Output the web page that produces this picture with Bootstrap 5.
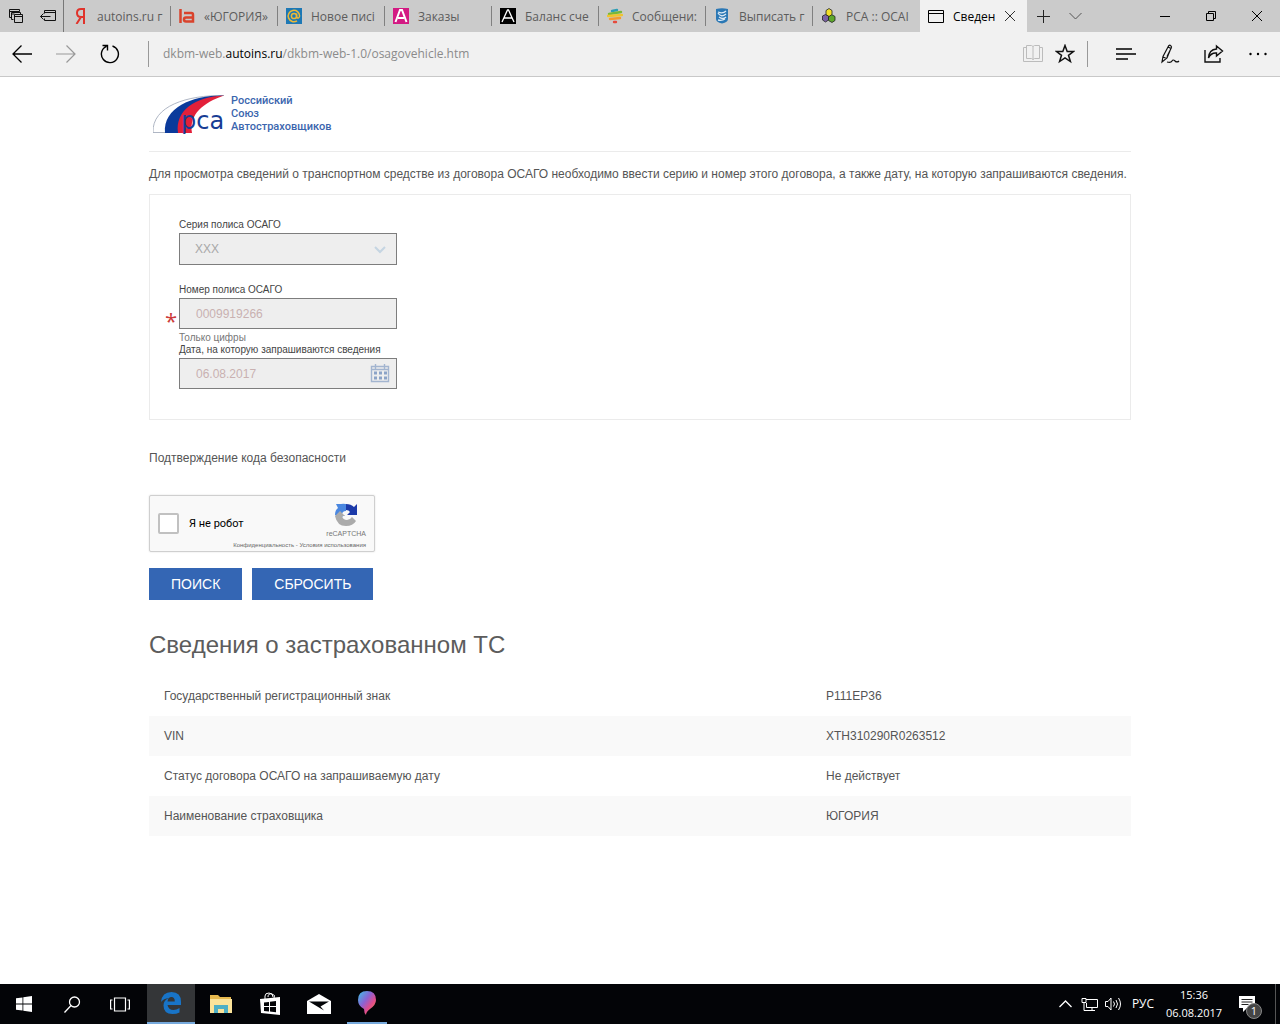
<!DOCTYPE html>
<html lang="ru">
<head>
<meta charset="utf-8">
<meta name="viewport" content="width=device-width, initial-scale=1">
<title>Сведения о застрахованном ТС</title>
<link href="https://cdn.jsdelivr.net/npm/bootstrap@5.3.0/dist/css/bootstrap.min.css" rel="stylesheet">
<style>
body{font-family:"Liberation Sans",Arial,sans-serif;font-size:12px;line-height:16px;color:#555;background:#fff}
button{font-family:inherit}
svg{display:block;flex:none}
.chrome-ui{font-family:"Open Sans","Noto Sans",sans-serif}
.bare{border:0;background:none;padding:0;color:inherit;display:flex;align-items:center;justify-content:center;flex:none}
/* tab strip */
.tabstrip{height:32px;background:#cbcbcb;color:#000}
.tabtools{width:64px;border-right:1px solid #777}
.tab-item{width:107px;height:32px;padding:0 8px;gap:9px;color:#5c5c5c;text-decoration:none;position:relative;flex:0 1 auto;min-width:0}
.tab-item+.tab-item:not(.current)::before{content:"";position:absolute;left:-1px;top:6px;height:20px;width:1px;background:#808080}
.tab-item.current{background:#f1f1f1;color:#000}
.tab-item span{white-space:nowrap;flex:1;min-width:0;padding-top:1px}
.w32{width:32px;height:32px}
.w46{width:46px;height:32px}
/* address bar */
.addressbar{height:45px;background:#f1f1f1;border-bottom:1px solid #c8c8c8;color:#111}
.w44{width:44px;height:44px}
.rule{width:1px;height:26px;background:#999}
.rule-gap{margin:0 16px 0 6px}
.address{min-width:0}
.url{padding-left:14px;font-size:12px;color:#8b8b8b;min-width:0;overflow:hidden;white-space:nowrap}
.url b{font-weight:400;color:#000}
/* page */
.sheet{width:100%;max-width:982px}
.brandrow{height:75px;padding-top:17px;border-bottom:1px solid #ebebeb}
.brandname{font:500 11px/13px Roboto,sans-serif;color:#3b66ae}
.lede{padding-top:14px}
.policy{margin-top:12px;padding:24px 15px 30px;border:1px solid #ebebeb}
.fields{display:grid;grid-template-columns:14px 218px}
.fields>*{grid-column:2}
.fields>.star{grid-column:1;color:#cc3b3b;height:31px;font:22px/44px "Open Sans",sans-serif}
.fields label,.hint{font-size:10px;line-height:12px;color:#444}
.fields .hint{color:#777;margin-top:3px}
.fields label{margin-bottom:2px}
.fields .label-gap{margin-top:19px}
.field{height:31px;width:100%;border:1px solid #7d7d7d;border-radius:0;background:#eee;color:#c9b1b1;padding:0 16px}
select.field{height:32px;appearance:none;color:#a8a8a8;padding:0 15px;opacity:1}
.over{position:absolute;right:7px;top:5px}
.confirm{margin-top:30px;padding-bottom:29px}
.captcha{width:226px;height:57px;background:#f9f9f9;border:1px solid #cfcfcf;border-radius:2px;padding:0 8px 6px;box-shadow:0 0 2px #ddd}
.captcha>input,.captcha>label{margin-top:6px}
.captcha input{appearance:none;width:21px;height:21px;border:2px solid #c1c1c1;border-radius:2px;background:#fff}
.captcha label{font:11px/16px Roboto,sans-serif;color:#000;margin-left:10px}
.tiny{font-size:7px;line-height:9px;color:#777;margin-top:2px}
.legalrow{width:226px;height:8px;margin-top:-11px;padding-right:9px;text-align:right}
.legal{display:block;font-size:6px;line-height:8px;color:#666}
.legal a{color:inherit;text-decoration:none}
.actions{gap:10px;margin-top:19px}
.action{height:32px;border-radius:0;background:#3466b4;color:#fff;border:0;font-size:14px;line-height:32px;padding:0 22px}
.action:hover{background:#2a559a;color:#fff}
h1{font-size:24px;line-height:30px;color:#5c5c5c;font-weight:400}
.facts-title{margin:30px 0 16px}
.facts{width:100%;margin:0}
.facts th,.facts td{font-weight:400;padding:12px 15px;height:40px}
.facts th{width:662px}
.facts tr:nth-child(even){background:#f9f9f9}
/* taskbar */
.taskbar{height:40px;background:#030407;color:#fff}
.w48{width:48px;height:40px}
.w49{width:49px;height:40px}
.apps{margin-left:3px}
.running{border-bottom:2px solid #76a9dc}
.focused{background:#343638;width:48px;margin-right:1px}
.paint{width:40px;margin-left:4px}
.w24{width:24px;height:40px}
.lang{width:36px;height:40px}
.clock{width:66px;font-size:11px;line-height:18px}
.notify{position:relative;width:40px;height:40px}
.desktop-edge{width:5px;height:40px;margin-left:8px;border-left:1px solid #555}
.count{position:absolute;left:19px;top:19px;width:16px;height:16px;border-radius:50%;background:#454545;border:1px solid #888;font-size:11px;line-height:14px;text-align:center}
</style>
<script src="https://cdn.jsdelivr.net/npm/bootstrap@5.3.0/dist/js/bootstrap.bundle.min.js"></script>
</head>
<body>
<div class="d-flex flex-column min-vh-100">

<header class="chrome-ui">
  <div class="tabstrip d-flex align-items-center">
    <div class="tabtools d-flex">
      <button class="bare w32" aria-label="Отложенные вкладки"><svg width="16" height="16" viewBox="0 0 16 16" fill="none" stroke="#111"><path d="M3.5 9.5h-2v-8h10v2M1.500 3.500h10M5.500 11.500h-2v-7h9v2M3.500 6h3M6.500 6.500h8v8h-8zM6.500 8.500h8"/></svg></button>
      <button class="bare w32" aria-label="Отложить вкладки"><svg width="16" height="16" viewBox="0 0 16 16" fill="none" stroke="#111"><path d="M4.500 5.500v-3h11v10h-11v-2M4.500 4.500h11M.5 8.500h10M3.500 5.500l-3 3 3 3"/></svg></button>
    </div>
    <nav class="d-flex flex-shrink-1" aria-label="Вкладки">
      <a href="#" class="tab-item d-flex align-items-center"><svg width="16" height="16" viewBox="0 0 16 16" fill="none" stroke="#e0332b" stroke-width="2"><path d="M12 16V1H9Q5 1 5 5t4 4h3M9 9L4.500 16"/></svg><span>autoins.ru г</span></a>
      <a href="#" class="tab-item d-flex align-items-center"><svg width="16" height="16" viewBox="0 0 16 16" fill="none" stroke="#d9432c" stroke-width="2.500"><path d="M1.500 1v14M5 5h7.500q1.500 0 1.500 2v6.500H7q-2 0-2-2t2-2h7"/></svg><span>«ЮГОРИЯ»</span></a>
      <a href="#" class="tab-item d-flex align-items-center"><svg width="16" height="16" viewBox="0 0 16 16" fill="none" stroke="#eeb936" stroke-width="1.500"><path fill="#1d78b5" stroke="none" d="M0 0h16v16H0z"/><circle cx="8" cy="8" r="2.600"/><path d="M10.600 5.500v4q2.500 1.500 3-1.500A5.700 5.700 0 1 0 11 12.800"/></svg><span>Новое писі</span></a>
      <a href="#" class="tab-item d-flex align-items-center"><svg width="16" height="16" viewBox="0 0 16 16"><path fill="#d31a83" d="M0 0h16v16H0z"/><path d="M2.500 14L7 2h2l4.500 12M5 10h6" fill="none" stroke="#fff" stroke-width="2"/></svg><span>Заказы</span></a>
      <a href="#" class="tab-item d-flex align-items-center"><svg width="16" height="16" viewBox="0 0 16 16"><path d="M0 0h16v16H0z"/><path d="M2 14L7.500 2h1L14 14M4 10h8" fill="none" stroke="#fff" stroke-width="1.300"/></svg><span>Баланс сче</span></a>
      <a href="#" class="tab-item d-flex align-items-center"><svg width="16" height="16" viewBox="0 0 16 16" fill="none" stroke-width="2.400" stroke-linecap="round"><path stroke="#2b9eb5" d="M5 3l5-1"/><path stroke="#78b83a" d="M2 6l12-2"/><path stroke="#f0c52e" d="M1 8l14-1"/><path stroke="#f39b31" d="M3 11l10-1"/><path stroke="#e64a3c" d="M7 14h2"/></svg><span>Сообщени:</span></a>
      <a href="#" class="tab-item d-flex align-items-center"><svg width="16" height="16" viewBox="0 0 16 16"><path d="M2 1q6-1.500 12 0v10q0 3-6 4.500Q2 14 2 11z" fill="#2b78b5"/><path d="M4 4q5 2 8-1M4 5q3 5 8 1M5 9q4 3 7 0M4 12q4 1 7-1" fill="none" stroke="#dceaf5" stroke-width="1.300"/></svg><span>Выписать г</span></a>
      <a href="#" class="tab-item d-flex align-items-center"><svg width="16" height="16" viewBox="0 0 16 16" stroke="#222" stroke-width=".8"><path fill="#7b62a5" d="M1.500 8l3-1.500 3 1.500v4l-3 2-3-2z"/><path fill="#5da82c" d="M7.500 9l3-2.500 3.500 2v4l-3 2-3.500-2z"/><path fill="#f2df28" d="M5 2.500l3-2 3 2v4L8 8.500l-3-2z"/></svg><span>РСА :: ОСАІ</span></a>
      <a href="#" class="tab-item current d-flex align-items-center" aria-current="page"><svg width="16" height="16" viewBox="0 0 16 16" fill="none" stroke="#000"><path d="M.5 2.500h15v12H.5zM.5 5.500h15"/></svg><span>Сведен</span><svg class="me-1" width="10" height="10" viewBox="0 0 10 10" stroke="#333"><path d="M0 0l10 10M10 0L0 10"/></svg></a>
    </nav>
    <button class="bare w32" aria-label="Новая вкладка"><svg width="13" height="13" viewBox="0 0 13 13" stroke="#222"><path d="M0 6.500h13M6.500 0v13"/></svg></button>
    <button class="bare w32" aria-label="Показать вкладки"><svg width="13" height="8" viewBox="0 0 13 8" fill="none" stroke="#555"><path d="M.5 1l6 6 6-6"/></svg></button>
    <div class="d-flex ms-auto">
      <button class="bare w46" aria-label="Свернуть"><svg width="10" height="10" viewBox="0 0 10 10" stroke="#000"><path d="M0 5.500h10"/></svg></button>
      <button class="bare w46" aria-label="Восстановить"><svg width="10" height="10" viewBox="0 0 10 10" fill="none" stroke="#000"><path d="M.5 2.500h7v7h-7zM2.500 2.500v-2h7v7h-2"/></svg></button>
      <button class="bare w46" aria-label="Закрыть"><svg width="10" height="10" viewBox="0 0 10 10" stroke="#000"><path d="M0 0l10 10M10 0L0 10"/></svg></button>
    </div>
  </div>
  <div class="addressbar d-flex align-items-center">
    <button class="bare w44" aria-label="Назад"><svg width="20" height="18" viewBox="0 0 20 18" fill="none" stroke="#000" stroke-width="1.300"><path d="M9.500.5L1 9l8.500 8.500M1 9h19"/></svg></button>
    <button class="bare w44" aria-label="Вперёд"><svg width="20" height="18" viewBox="0 0 20 18" fill="none" stroke="#999" stroke-width="1.200"><path d="M10.500.5L19 9l-8.500 8.500M19 9H0"/></svg></button>
    <button class="bare w44" aria-label="Обновить"><svg width="20" height="20" viewBox="0 0 20 20" fill="none" stroke="#000" stroke-width="1.400"><path d="M12.500 2a8.500 8.500 0 1 1-6 .3M2.500 1.500h5v5"/></svg></button>
    <div class="address d-flex align-items-center flex-grow-1 ms-3">
      <div class="rule"></div>
      <div class="url" role="textbox" aria-label="Адрес">dkbm-web.<b>autoins.ru</b>/dkbm-web-1.0/osagovehicle.htm</div>
    </div>
    <button class="bare w32" aria-label="Режим чтения"><svg width="20" height="18" viewBox="0 0 20 18" fill="none" stroke="#bcbcbc"><path d="M3.500 2.500h-3v14h19v-14h-3M10 1.500v13M3.500.5h5l1.500 1 1.500-1h5v13h-5l-1.500 1-1.500-1h-5z"/></svg></button>
    <button class="bare w32" aria-label="В избранное"><svg width="20" height="20" viewBox="0 0 20 20" fill="none" stroke="#111" stroke-width="1.500"><path d="M10 1.500l2.200 6H18.500l-5 3.800 1.900 6.200L10 13.800l-5.400 3.700 1.900-6.200-5-3.800h6.300z"/></svg></button>
    <div class="rule rule-gap"></div>
    <button class="bare w44" aria-label="Концентратор"><svg width="20" height="12" viewBox="0 0 20 12" stroke="#000" stroke-width="1.300"><path d="M0 1h16M0 6h20M0 11h12"/></svg></button>
    <button class="bare w44" aria-label="Веб-заметка"><svg width="20" height="20" viewBox="0 0 20 20" fill="none" stroke="#111" stroke-width="1.200"><path d="M2 18l1-5.500L8.500 2q2-2 3 1L7 14l-5 4zM3 13l3.500 1.500M8 3l3 1.500-4 8M7 18q4 1 5-1t3 0 4 0"/></svg></button>
    <button class="bare w44" aria-label="Поделиться"><svg width="20" height="20" viewBox="0 0 20 20" fill="none" stroke="#111" stroke-width="1.400"><path d="M1 6v12h15v-4M12.500 2l6 5-6 5V9Q7 8.500 4.500 14 5 5.500 12.500 5z"/></svg></button>
    <button class="bare w44" aria-label="Дополнительно"><svg width="18" height="4" viewBox="0 0 18 4"><circle cx="1.500" cy="2" r="1.200"/><circle cx="9" cy="2" r="1.200"/><circle cx="16.500" cy="2" r="1.200"/></svg></button>
  </div>
</header>

<main class="sheet mx-auto flex-grow-1">
  <div class="brandrow d-flex align-items-start">
    <svg class="ms-1" width="74" height="42" viewBox="0 0 74 42" role="img" aria-label="РСА">
      <path d="M0 38.500C-1 12 34 1 71 1.500" fill="none" stroke="#9aa3b5" stroke-width=".8"/>
      <path d="M0 38.500h14" stroke="#9aa3b5" stroke-width=".8"/>
      <path d="M12 39C10 13 40 1 71 1.500 38 7 24 18 26 39z" fill="#0b3a9b"/>
      <path d="M25 39C22 16 42 3 71 1.500 50 9 36 20 39 39z" fill="#e3203a"/>
      <text x="28" y="35" font-family="DejaVu Sans" font-size="24" fill="#173d94">рса</text>
    </svg>
    <div class="brandname ms-1">Российский<br>Союз<br>Автостраховщиков</div>
  </div>
  <p class="mb-0 lede">Для просмотра сведений о транспортном средстве из договора ОСАГО необходимо ввести серию и номер этого договора, а также дату, на которую запрашиваются сведения.</p>

  <form onsubmit="return false">
    <div class="policy">
      <div class="fields">
        <label for="series">Серия полиса ОСАГО</label>
        <div class="position-relative">
          <select id="series" class="field" disabled><option>XXX</option></select>
          <svg class="over me-1 mt-1" width="12" height="12" viewBox="0 0 12 12" fill="none" stroke="#c5d5e2" stroke-width="2"><path d="M1 5l5 5 5-5"/></svg>
        </div>
        <label for="number" class="label-gap">Номер полиса ОСАГО</label>
        <span class="star">*</span>
        <input id="number" class="field" value="0009919266" disabled>
        <span class="hint">Только цифры</span>
        <label for="date">Дата, на которую запрашиваются сведения</label>
        <div class="position-relative">
          <input id="date" class="field" value="06.08.2017" disabled>
          <button type="button" class="bare over" aria-label="Календарь"><svg width="20" height="20" viewBox="0 0 20 20"><path d="M1.500 3.500h17v15h-17zM1.500 6.500h17M5.500 1v5M14.500 1v5" fill="none" stroke="#a3b5d0" stroke-width="1.400"/><path d="M4 10h3M9 10h3M14 10h3M4 15h3M9 15h3M14 15h3" stroke="#8ca3c7" stroke-width="3"/></svg></button>
        </div>
      </div>
    </div>
    <p class="confirm mb-0">Подтверждение кода безопасности</p>
    <div class="captcha d-flex align-items-center">
      <input type="checkbox" id="robot"><label for="robot">Я не робот</label>
      <div class="ms-auto d-flex flex-column align-items-center">
        <svg width="24" height="24" viewBox="0 0 24 24"><path fill="#4a87e0" d="M12 1v7Q8 8 8 12l3 0-5 3-5-3Q1 7 4 5L2 1h5q2-.5 5 0z"/><path fill="#1c3aa9" d="M12 1q5 0 8 3l3-3v11H13l3-3q-1-2-4-2z"/><path fill="#ababab" d="M1 13l5-5 5 5H8q1 4 5 4 3 0 5-3l4 4q-3 5-10 5Q3 23 1 13z"/></svg>
        <span class="tiny">reCAPTCHA</span>
      </div>
    </div>
    <div class="legalrow"><span class="legal"><a href="#">Конфиденциальность</a> - <a href="#">Условия использования</a></span></div>
    <div class="d-flex actions">
      <button type="submit" class="btn action">ПОИСК</button>
      <button type="reset" class="btn action">СБРОСИТЬ</button>
    </div>
  </form>

  <h1 class="facts-title">Сведения о застрахованном ТС</h1>
  <table class="facts">
    <tbody>
      <tr><th scope="row">Государственный регистрационный знак</th><td>Р111ЕР36</td></tr>
      <tr><th scope="row">VIN</th><td>XTH310290R0263512</td></tr>
      <tr><th scope="row">Статус договора ОСАГО на запрашиваемую дату</th><td>Не действует</td></tr>
      <tr><th scope="row">Наименование страховщика</th><td>ЮГОРИЯ</td></tr>
    </tbody>
  </table>
</main>

<footer class="taskbar chrome-ui d-flex align-items-center">
  <button class="bare w48" aria-label="Пуск"><svg width="16" height="16" viewBox="0 0 16 16" fill="#fff"><path d="M0 2.300l6.500-.9v6.200H0zM7.300 1.300L16 0v7.600H7.300zM0 8.400h6.500v6.200L0 13.700zM7.300 8.400H16V16l-8.700-1.300z"/></svg></button>
  <button class="bare w48" aria-label="Поиск Windows"><svg width="17" height="17" viewBox="0 0 17 17" fill="none" stroke="#fff" stroke-width="1.300"><circle cx="10.500" cy="6" r="5"/><path d="M7 9.500L.5 16.500"/></svg></button>
  <button class="bare w48" aria-label="Представление задач"><svg width="20" height="15" viewBox="0 0 20 15" fill="none" stroke="#fff" stroke-width="1.200"><path d="M4.500 1h11v13h-11zM2.500 3H.6v9h1.900M17.500 3h1.900v9h-1.900"/></svg></button>
  <div class="d-flex me-auto apps">
    <button class="bare w49 running focused" aria-label="Microsoft Edge"><svg width="20" height="22" viewBox="0 0 20 22"><path fill="#1874c7" d="M0 10Q1 0 10.500 0 20 0 20 10v3H6.500q1 5 6 5 3 0 6-2v4.500q-3 1.500-7 1.500-9 0-9-8.500Q2.500 8 8 6 2.500 6.500 0 10zm6.500-.5h7.300q0-4.500-3.300-4.500-3.500 0-4 4.500z"/></svg></button>
    <button class="bare w49" aria-label="Проводник"><svg width="22" height="20" viewBox="0 0 22 20"><path fill="#e7b94e" d="M0 1h8l2 2h11v5H0z"/><path fill="#fbe39a" d="M0 5h22v14H0z"/><path fill="#4eafc5" d="M4 11h14v8h-4v-4H8v4H4z"/></svg></button>
    <button class="bare w49" aria-label="Магазин"><svg width="22" height="24" viewBox="0 0 22 24"><path d="M6 7V4q0-3 4-3t4 4M9 5q0-4 4-3t2 4" fill="none" stroke="#fff"/><path fill="#fff" d="M1 7l20-2v18L2 21z"/><path fill="#030407" d="M5 10.500l5-.6v4H5zM11 9.800l6-.8v4.900h-6zM5 15h5v4.500l-5-.6zM11 15h6v5.200l-6-.6z"/></svg></button>
    <button class="bare w49" aria-label="Почта"><svg width="24" height="20" viewBox="0 0 24 20"><path fill="#fff" d="M0 7l12-7 12 7v13H0z"/><path fill="#030407" d="M2 7.500h20l-8.500 5 3.500 4z"/></svg></button>
    <button class="bare w49 running paint" aria-label="Paint 3D"><svg width="20" height="24" viewBox="0 0 20 24"><defs><linearGradient id="drop" x1="0" y1="0" x2="1" y2="1"><stop offset="0" stop-color="#39c5ea"/><stop offset=".4" stop-color="#8b63d3"/><stop offset=".65" stop-color="#e14c8b"/><stop offset="1" stop-color="#f6a13c"/></linearGradient></defs><path fill="url(#drop)" d="M10 0q9 0 9 9 0 5-6 9-4 3-4 6-2-2-2-6-6-3-6-9 0-9 9-9z"/></svg></button>
  </div>
  <button class="bare w24" aria-label="Скрытые значки"><svg width="13" height="8" viewBox="0 0 13 8" fill="none" stroke="#fff" stroke-width="1.300"><path d="M.5 7l6-6 6 6"/></svg></button>
  <button class="bare w24" aria-label="Сеть"><svg width="17" height="15" viewBox="0 0 17 15" fill="none" stroke="#fff"><path d="M5 2.500h11.500v8h-11V6M1 1.500h4v4H1zM3 5.500v8h6M11 10.500v3M8 13.500h6"/></svg></button>
  <button class="bare w24" aria-label="Громкость"><svg width="17" height="14" viewBox="0 0 17 14" fill="none" stroke="#fff"><path d="M.5 4.500H3l3-3.500v12L3 9.500H.5zM8.500 4.500q2 2.500 0 5M11 3q3 4 0 8M13.500 1q4 6 0 12"/></svg></button>
  <button class="bare lang">РУС</button>
  <div class="clock text-center">15:36<br>06.08.2017</div>
  <button class="bare notify" aria-label="Центр уведомлений"><svg width="16" height="16" viewBox="0 0 16 16"><path fill="#fff" d="M0 0h16v12H8l-4 4v-4H0z"/><path d="M2.500 3.500h11M2.500 6h11M2.500 8.500h7" stroke="#222"/></svg><span class="count">1</span></button>
  <div class="desktop-edge"></div>
</footer>
</div>
</body>
</html>
